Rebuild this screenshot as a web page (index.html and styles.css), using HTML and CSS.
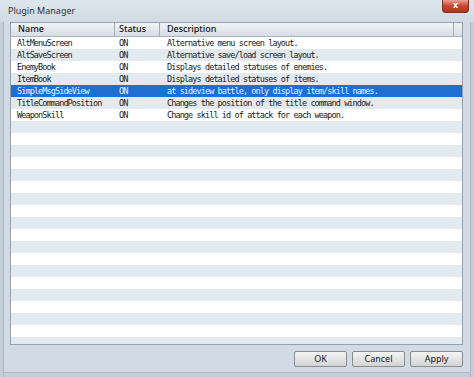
FILE: index.html
```html
<!DOCTYPE html>
<html>
<head>
<meta charset="utf-8">
<link rel="stylesheet" href="styles.css">
</head>
<body>
<div class="window">
  <div class="titlebar">
    <span class="title">Plugin Manager</span>
    <span class="close">x</span>
  </div>
  <div class="table">
    <div class="row head">
      <div class="c name">Name</div>
      <div class="c status">Status</div>
      <div class="c desc">Description</div>
      <div class="c rest"></div>
    </div>
    <div class="body">
      <div class="row"><div class="c name">AltMenuScreen</div><div class="c status">ON</div><div class="c desc">Alternative menu screen layout.</div></div>
      <div class="row"><div class="c name">AltSaveScreen</div><div class="c status">ON</div><div class="c desc">Alternative save/load screen layout.</div></div>
      <div class="row"><div class="c name">EnemyBook</div><div class="c status">ON</div><div class="c desc">Displays detailed statuses of enemies.</div></div>
      <div class="row"><div class="c name">ItemBook</div><div class="c status">ON</div><div class="c desc">Displays detailed statuses of items.</div></div>
      <div class="row sel"><div class="c name">SimpleMsgSideView</div><div class="c status">ON</div><div class="c desc">at sideview battle, only display item/skill names.</div></div>
      <div class="row"><div class="c name">TitleCommandPosition</div><div class="c status">ON</div><div class="c desc">Changes the position of the title command window.</div></div>
      <div class="row"><div class="c name">WeaponSkill</div><div class="c status">ON</div><div class="c desc">Change skill id of attack for each weapon.</div></div>
      <div class="row"></div><div class="row"></div><div class="row"></div><div class="row"></div>
      <div class="row"></div><div class="row"></div><div class="row"></div><div class="row"></div>
      <div class="row"></div><div class="row"></div><div class="row"></div><div class="row"></div>
      <div class="row"></div><div class="row"></div><div class="row"></div><div class="row"></div>
      <div class="row"></div><div class="row"></div><div class="row"></div><div class="row"></div>
    </div>
  </div>
  <div class="footer">
    <button class="btn">OK</button>
    <button class="btn">Cancel</button>
    <button class="btn">Apply</button>
  </div>
</div>
</body>
</html>
```
FILE: styles.css
```css
html, body {
  margin: 0;
  padding: 0;
  background: #c9d3dc;
}
.window {
  width: 474px;
  height: 377px;
  box-sizing: border-box;
  background: #d0dbe5;
  display: flex;
  flex-direction: column;
  padding: 0 11px 0 10px;
  position: relative;
  box-shadow: inset 3px 0 0 #c3ced8, inset 4px 0 0 #aeb9c4, inset -3px 0 0 #c3ced8, inset -4px 0 0 #aeb9c4, inset 0 -4px 0 #c3ced8, inset 0 -5px 0 #aeb9c4;
}
.titlebar {
  height: 22px;
  flex: none;
  display: flex;
  align-items: center;
  margin: 0 -11px 0 -10px;
  padding: 0 0 0 8px;
  background: linear-gradient(#dde5ec, #d0dbe5);
  position: relative;
}
.title {
  font-family: "Noto Sans", "Liberation Sans", sans-serif;
  font-size: 9px;
  color: #333;
  margin-top: -1px;
}
.close {
  position: absolute;
  right: 5px;
  top: 0;
  width: 27px;
  height: 13px;
  background: linear-gradient(#e8a294, #c9452f 50%, #b8311c);
  border: 1px solid #7a2d22;
  border-top: none;
  border-radius: 0 0 4px 4px;
  box-sizing: border-box;
  color: #fff;
  font-family: "DejaVu Sans", sans-serif;
  font-weight: bold;
  font-size: 8px;
  line-height: 11px;
  text-align: center;
}
.table {
  height: 323px;
  flex: none;
  border: 1px solid #95a2ae;
  background: #fff;
  box-sizing: border-box;
  overflow: hidden;
  display: flex;
  flex-direction: column;
}
.row {
  display: flex;
  height: 12px;
  flex: none;
  font-family: "DejaVu Sans Mono", monospace;
  font-size: 8.5px;
  letter-spacing: -0.9px;
  line-height: 12px;
  color: #1a1a1a;
  white-space: nowrap;
}
.body .row:nth-child(even) { background: #e2e9ef; }
.body .row.sel { background: #1f6fd2; color: #e8f1ff; }
.c { box-sizing: border-box; overflow: hidden; }
.name { width: 104px; padding-left: 6px; }
.status { width: 45px; padding-left: 4px; }
.desc { width: 294px; padding-left: 7px; }
.rest { flex: 1; }
.row.head {
  height: 13px;
  background: linear-gradient(#f1f4f6, #d6dde3);
  border-bottom: 1px solid #a9b3bd;
  font-family: "Noto Sans", "Liberation Sans", sans-serif;
  font-size: 9px;
  font-weight: 500;
  letter-spacing: 0;
  line-height: 12px;
  color: #111;
}
.row.head .c { border-right: 1px solid #a3adb7; }
.row.head .name { padding-left: 7px; }
.row.head .rest { border-right: none; }
.footer {
  display: flex;
  justify-content: flex-end;
  gap: 5px;
  padding-top: 6px;
}
.btn {
  width: 53px;
  height: 16px;
  box-sizing: border-box;
  border: 1px solid #8a8d90;
  border-radius: 2px;
  background: linear-gradient(#f4f4f4, #e4e4e4 50%, #d4d4d4);
  font-family: "Noto Sans", "Liberation Sans", sans-serif;
  font-size: 9px;
  color: #1a1a1a;
  padding: 0;
  line-height: 14px;
}
```
